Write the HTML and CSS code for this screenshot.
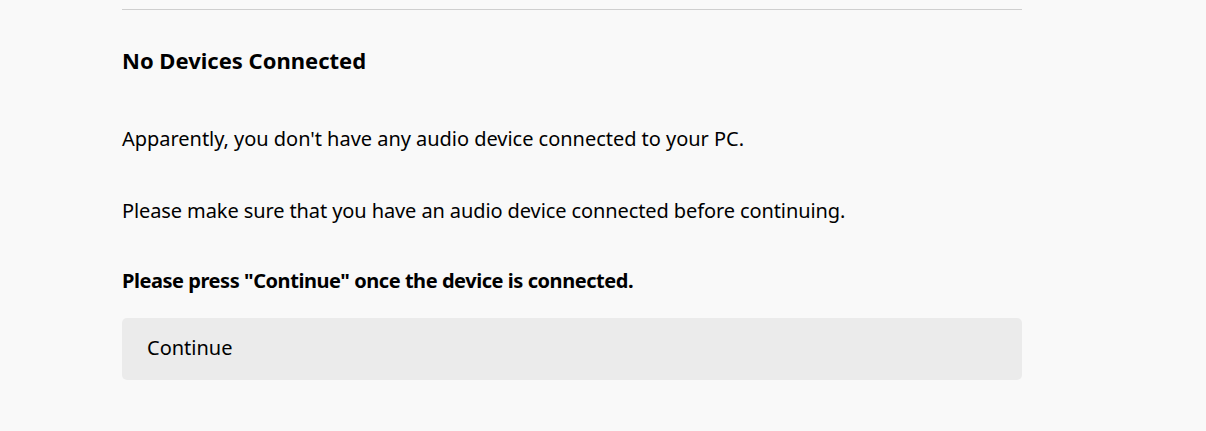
FILE: index.html
```html
<!DOCTYPE html>
<html lang="en">
<head>
<meta charset="utf-8">
<title>No Devices Connected</title>
<link rel="stylesheet" href="styles.css">
</head>
<body>
<main class="panel">
  <div class="divider"></div>
  <h1 class="title">No Devices Connected</h1>
  <p class="text first">Apparently, you don't have any audio device connected to your PC.</p>
  <p class="text second">Please make sure that you have an audio device connected before continuing.</p>
  <p class="text strong">Please press "Continue" once the device is connected.</p>
  <button class="continue" type="button">Continue</button>
</main>
</body>
</html>
```

FILE: styles.css
```css
html, body {
  margin: 0;
  padding: 0;
  background: #f9f9f9;
}
body {
  font-family: "Noto Sans", "Open Sans", sans-serif;
  color: #000;
  padding-top: 9px;
}
.panel {
  width: 900px;
  margin-left: 122px;
  display: flex;
  flex-direction: column;
}
.divider {
  height: 1px;
  background: #cfcfcf;
}
.title {
  margin: 35px 0 0;
  font-size: 22px;
  line-height: 30px;
  font-weight: 700;
}
.text {
  margin: 0;
  font-size: 20px;
  line-height: 28px;
}
.first { margin-top: 50px; letter-spacing: -0.03px; }
.second { margin-top: 44px; letter-spacing: -0.1px; }
.strong { margin-top: 42px; font-weight: 700; letter-spacing: -0.45px; }
.continue {
  margin-top: 23px;
  height: 62px;
  border: none;
  border-radius: 5px;
  background: #ebebeb;
  font-family: inherit;
  font-size: 20px;
  line-height: 28px;
  color: #000;
  text-align: left;
  padding: 16px 25px 18px;
}
```
